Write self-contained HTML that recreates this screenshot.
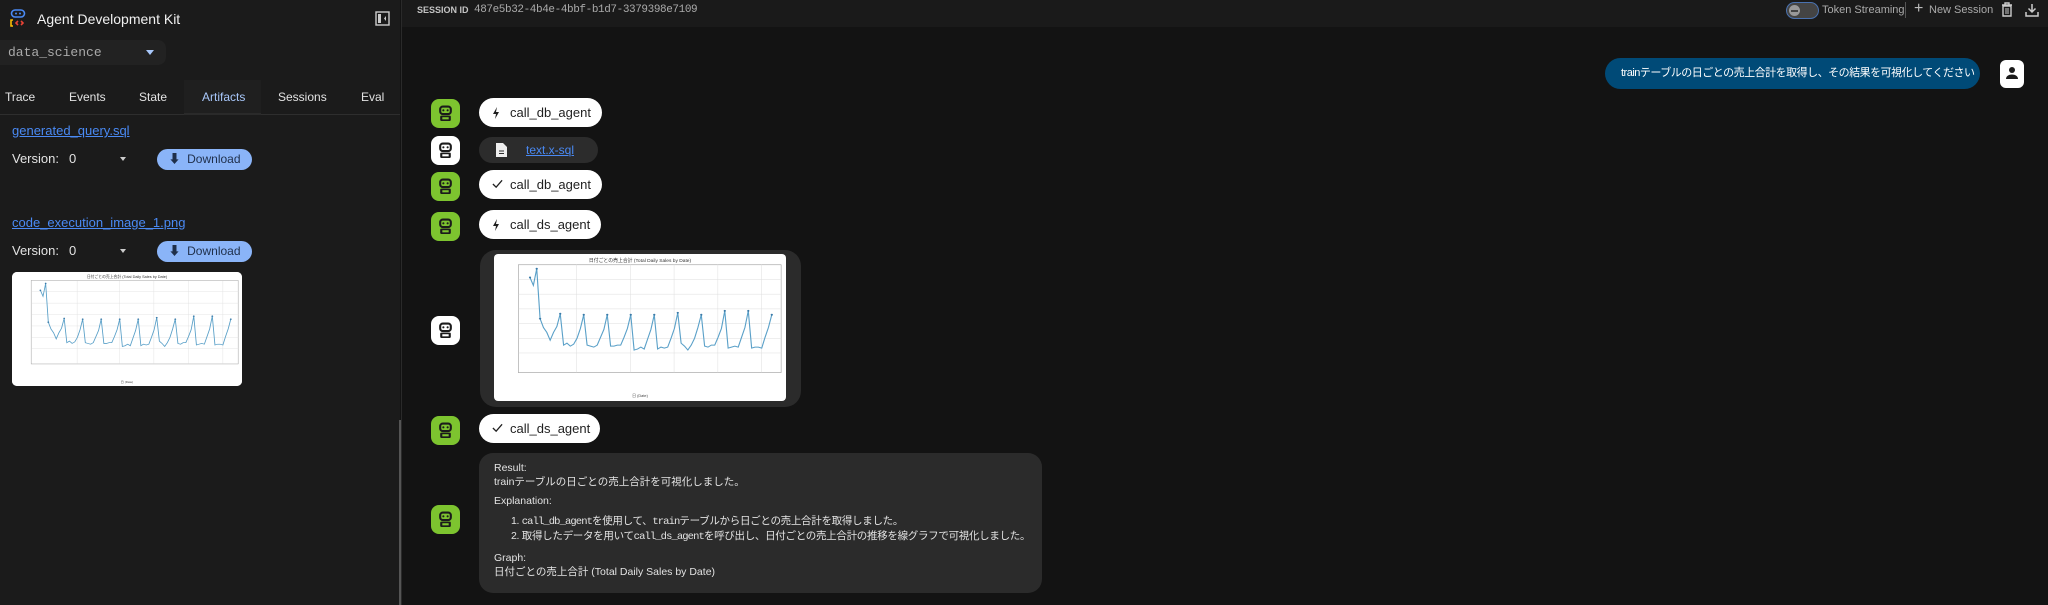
<!DOCTYPE html>
<html><head><meta charset="utf-8">
<style>
*{box-sizing:border-box;margin:0;padding:0}
body{width:2048px;height:605px;overflow:hidden;background:#131313;font-family:"Liberation Sans","Noto Sans CJK JP",sans-serif;color:#e3e3e3;position:relative}
.abs{position:absolute}
#side{left:0;top:0;width:400px;height:605px;background:#1b1b1b}
.mono{font-family:"Liberation Mono","Noto Sans CJK JP",monospace}
.tab{position:absolute;top:90px;font-size:12px;color:#e3e3e3}
.link{color:#4a8af4;text-decoration:underline;font-size:13px;position:absolute;left:12px}
.ver{position:absolute;left:12px;font-size:13px;color:#e3e3e3}
.btn{position:absolute;left:157px;width:95px;height:21px;border-radius:11px;background:#8ab4f8;color:#1f2f4a;font-size:12px;line-height:21px;text-align:center}
.av{position:absolute;left:431px;width:29px;height:29px;border-radius:8px;background:#7dc42f}
.av.w{background:#fff}
.av svg{position:absolute;left:6px;top:6px}
.chip{position:absolute;left:479px;height:29px;border-radius:15px;background:#fff;color:#1f1f1f;font-size:13px;line-height:29px;padding-left:31px;white-space:nowrap}
.chip svg{position:absolute;left:13px;top:9px}
.res{font-size:10.5px;line-height:14px;color:#e3e3e3;white-space:nowrap}
.res .mono{letter-spacing:-0.9px;font-size:10.5px}
.lst{letter-spacing:-0.3px}
</style></head><body>
<svg width="0" height="0" style="position:absolute">
<defs>
<symbol id="bot" viewBox="0 0 16 16"><rect x="3" y="1.5" width="10" height="7" rx="2.5" fill="none" stroke="#1b1b1b" stroke-width="2"/><circle cx="6" cy="5" r="1" fill="#1b1b1b"/><circle cx="10" cy="5" r="1" fill="#1b1b1b"/><rect x="3" y="10" width="10" height="5" rx="1" fill="#1b1b1b"/><rect x="5" y="11.5" width="6" height="2" fill="#7dc42f"/></symbol>
<symbol id="botw" viewBox="0 0 16 16"><rect x="3" y="1.5" width="10" height="7" rx="2.5" fill="none" stroke="#1b1b1b" stroke-width="2"/><circle cx="6" cy="5" r="1" fill="#1b1b1b"/><circle cx="10" cy="5" r="1" fill="#1b1b1b"/><rect x="3" y="10" width="10" height="5" rx="1" fill="#1b1b1b"/><rect x="5" y="11.5" width="6" height="2" fill="#fff"/></symbol>
<symbol id="chart" viewBox="0 0 300 150" preserveAspectRatio="none">
<rect width="300" height="150" fill="#fff"/>
<text x="150" y="8" font-size="5" text-anchor="middle" fill="#333" font-family="Liberation Sans">日付ごとの売上合計 (Total Daily Sales by Date)</text>
<rect x="25" y="11" width="270" height="110" fill="none" stroke="#999" stroke-width=".6"/>
<g stroke="#ddd" stroke-width=".5"><line x1="25" y1="26" x2="295" y2="26"/><line x1="25" y1="41" x2="295" y2="41"/><line x1="25" y1="56" x2="295" y2="56"/><line x1="25" y1="71" x2="295" y2="71"/><line x1="25" y1="86" x2="295" y2="86"/><line x1="25" y1="101" x2="295" y2="101"/><line x1="85" y1="11" x2="85" y2="121"/><line x1="140" y1="11" x2="140" y2="121"/><line x1="185" y1="11" x2="185" y2="121"/><line x1="230" y1="11" x2="230" y2="121"/><line x1="275" y1="11" x2="275" y2="121"/></g>
<g transform="translate(37,0) scale(1.15,1) translate(-37,0)">
<polyline fill="none" stroke="#5aa0c8" stroke-width="1" points="37,24 40,32 43,15 46,66 49,75 52,80 55,88 58,80 61,74 64,61 67,93 70,91 73,94 76,92 79,86 82,76 85,62 88,93 91,94 94,95 97,93 100,85 103,77 106,62 109,94 112,94 115,93 118,93 121,85 124,76 127,62 130,98 133,97 136,95 139,97 142,87 145,77 148,62 151,97 154,95 157,96 160,95 163,86 166,76 169,60 172,91 175,94 178,98 181,93 184,86 187,75 190,62 193,94 196,95 199,93 202,93 205,85 208,76 211,58 214,96 217,95 220,94 223,95 226,85 229,75 232,58 235,96 238,95 241,95 244,96 247,85 250,75 253,62"/>
</g>
<g fill="#3a7aa8" transform="translate(37,0) scale(1.15,1) translate(-37,0)"><circle cx="37" cy="24" r="1"/><circle cx="43" cy="15" r="1"/><circle cx="46" cy="66" r="1"/><circle cx="64" cy="61" r="1"/><circle cx="85" cy="62" r="1"/><circle cx="106" cy="62" r="1"/><circle cx="127" cy="62" r="1"/><circle cx="148" cy="62" r="1"/><circle cx="169" cy="60" r="1"/><circle cx="190" cy="62" r="1"/><circle cx="211" cy="58" r="1"/><circle cx="232" cy="58" r="1"/><circle cx="253" cy="62" r="1"/></g>
<text x="150" y="146" font-size="4" text-anchor="middle" fill="#444" font-family="Liberation Sans">日 (Date)</text>
</symbol>
<symbol id="bolt" viewBox="0 0 8 12"><path d="M5 0L1 7h3l-1 5 4-7H4z" fill="#1f1f1f"/></symbol>
<symbol id="chk" viewBox="0 0 12 10"><path d="M1 5l3.5 3.5L11 1" fill="none" stroke="#1f1f1f" stroke-width="1.4"/></symbol>
</defs></svg>

<div id="side" class="abs">
  <svg class="abs" style="left:9px;top:9px" width="18" height="18" viewBox="0 0 18 18"><rect x="2.5" y="1" width="13" height="7" rx="3.5" fill="none" stroke="#4a8af4" stroke-width="1.6"/><circle cx="7" cy="4.5" r="1" fill="#4a8af4"/><circle cx="11" cy="4.5" r="1" fill="#4a8af4"/><path d="M4 11H2v6h2" fill="none" stroke="#fbbc04" stroke-width="1.6"/><path d="M9 12l-2 2 2 2M12 12l2 2-2 2" fill="none" stroke="#ea4335" stroke-width="1.6"/></svg>
  <div class="abs" style="left:37px;top:11px;font-size:14px;color:#f1f1f1">Agent Development Kit</div>
  <svg class="abs" style="left:375px;top:11px" width="15" height="15" viewBox="0 0 15 15"><rect x="1" y="1" width="13" height="13" fill="none" stroke="#ccc" stroke-width="1.4"/><rect x="3" y="3" width="3" height="9" fill="#ccc"/><path d="M11 5l-2 2.5 2 2.5" fill="#ccc"/></svg>
  <div class="abs" style="left:0;top:40px;width:166px;height:25px;background:#222;border-radius:0 8px 8px 0"></div>
  <div class="abs mono" style="left:8px;top:45px;font-size:13px;color:#aaa">data_science</div>
  <div class="abs" style="left:146px;top:50px;width:0;height:0;border-left:4px solid transparent;border-right:4px solid transparent;border-top:5px solid #a8c7fa"></div>
  <div class="abs" style="left:184px;top:80px;width:77px;height:35px;background:#1f1f1f"></div>
  <div class="tab" style="left:5px">Trace</div>
  <div class="tab" style="left:69px">Events</div>
  <div class="tab" style="left:139px">State</div>
  <div class="tab" style="left:202px;color:#a8c7fa">Artifacts</div>
  <div class="tab" style="left:278px">Sessions</div>
  <div class="tab" style="left:361px">Eval</div>
  <div class="abs" style="left:0;top:114px;width:400px;height:1px;background:#2e2e2e"></div>
  <div class="abs" style="left:184px;top:113px;width:77px;height:2px;background:#2a2a2a"></div>

  <div class="link" style="top:123px">generated_query.sql</div>
  <div class="ver" style="top:151px">Version:</div>
  <div class="ver" style="left:69px;top:151px">0</div>
  <div class="abs" style="left:120px;top:157px;border-left:3.5px solid transparent;border-right:3.5px solid transparent;border-top:4px solid #ccc"></div>
  <div class="btn" style="top:149px">⬇&nbsp; Download</div>

  <div class="link" style="top:215px">code_execution_image_1.png</div>
  <div class="ver" style="top:243px">Version:</div>
  <div class="ver" style="left:69px;top:243px">0</div>
  <div class="abs" style="left:120px;top:249px;border-left:3.5px solid transparent;border-right:3.5px solid transparent;border-top:4px solid #ccc"></div>
  <div class="btn" style="top:241px">⬇&nbsp; Download</div>

  <div class="abs" style="left:12px;top:272px;width:230px;height:114px;border-radius:5px;overflow:hidden;background:#fff"><svg width="230" height="114"><use href="#chart" width="230" height="114"/></svg></div>
  <div class="abs" style="left:399px;top:420px;width:3px;height:185px;background:#555"></div>
</div>
<div class="abs" style="left:401px;top:0;width:1px;height:605px;background:#2a2a2a"></div>

<!-- top bar -->
<div class="abs" style="left:402px;top:0;width:1646px;height:27px;background:#1a1a1a"></div>
<div class="abs" style="left:417px;top:5px;font-size:9px;font-weight:bold;color:#c4c4c4">SESSION ID</div>
<div class="abs mono" style="left:474px;top:4px;font-size:11px;color:#aaa;letter-spacing:-0.4px">487e5b32-4b4e-4bbf-b1d7-3379398e7109</div>
<div class="abs" style="left:1786px;top:2px;width:33px;height:17px;border-radius:9px;background:#444;border:1.5px solid #4a72b0"></div>
<div class="abs" style="left:1789px;top:5px;width:11px;height:11px;border-radius:6px;background:#999"></div>
<div class="abs" style="left:1791px;top:10px;width:7px;height:1.5px;background:#444"></div>
<div class="abs" style="left:1822px;top:4px;font-size:11px;color:#aaa">Token Streaming</div>
<div class="abs" style="left:1905px;top:2px;width:1px;height:16px;background:#555"></div>
<div class="abs" style="left:1914px;top:0px;font-size:16px;color:#bbb">+</div>
<div class="abs" style="left:1929px;top:4px;font-size:11px;color:#aaa">New Session</div>
<svg class="abs" style="left:2001px;top:2px" width="12" height="15" viewBox="0 0 12 15"><path d="M1 3h10M4 3V1h4v2M2 4h8v10H2z" fill="none" stroke="#ccc" stroke-width="1.4"/><path d="M5 6v6M7 6v6" stroke="#ccc" stroke-width="1"/></svg>
<svg class="abs" style="left:2025px;top:3px" width="14" height="14" viewBox="0 0 14 14"><path d="M7 1v8M3.5 5.5L7 9l3.5-3.5M1 9v4h12V9" fill="none" stroke="#ccc" stroke-width="1.5"/></svg>

<!-- user message -->
<div class="abs" style="left:1605px;top:58px;width:375px;height:31px;border-radius:16px;background:#004a77;color:#fff;font-size:11px;letter-spacing:-0.5px;line-height:31px;padding-left:16px;white-space:nowrap;overflow:hidden">trainテーブルの日ごとの売上合計を取得し、その結果を可視化してください</div>
<div class="abs" style="left:2000px;top:60px;width:24px;height:28px;border-radius:6px;background:#fff"></div>
<svg class="abs" style="left:2005px;top:66px" width="14" height="14" viewBox="0 0 14 14"><circle cx="7" cy="4" r="3" fill="#1b1b1b"/><path d="M1 13c0-3 3-4.5 6-4.5s6 1.5 6 4.5z" fill="#1b1b1b"/></svg>

<!-- bot rows -->
<div class="av" style="top:99px"><svg width="17" height="17"><use href="#bot" width="17" height="17"/></svg></div>
<div class="chip" style="top:98px;width:123px"><svg width="8" height="12"><use href="#bolt" width="8" height="12"/></svg>call_db_agent</div>

<div class="av w" style="top:136px"><svg width="17" height="17"><use href="#botw" width="17" height="17"/></svg></div>
<div class="abs" style="left:479px;top:137px;width:119px;height:26px;border-radius:13px;background:#2c2c2c"></div>
<svg class="abs" style="left:496px;top:143px" width="11" height="14" viewBox="0 0 11 14"><path d="M0 0h7l4 4v10H0z" fill="#eee"/><path d="M3 8h5M3 10.5h5" stroke="#2c2c2c" stroke-width="1"/></svg>
<div class="abs" style="left:526px;top:143px;font-size:12px;color:#4a8af4;text-decoration:underline">text.x-sql</div>

<div class="av" style="top:172px"><svg width="17" height="17"><use href="#bot" width="17" height="17"/></svg></div>
<div class="chip" style="top:170px;width:123px"><svg width="11" height="10"><use href="#chk" width="11" height="10"/></svg>call_db_agent</div>

<div class="av" style="top:212px"><svg width="17" height="17"><use href="#bot" width="17" height="17"/></svg></div>
<div class="chip" style="top:210px;width:122px"><svg width="8" height="12"><use href="#bolt" width="8" height="12"/></svg>call_ds_agent</div>

<div class="av w" style="top:316px"><svg width="17" height="17"><use href="#botw" width="17" height="17"/></svg></div>
<div class="abs" style="left:480px;top:250px;width:321px;height:157px;border-radius:16px;background:#2b2b2b"></div>
<div class="abs" style="left:494px;top:254px;width:292px;height:147px;border-radius:4px;overflow:hidden"><svg width="292" height="147"><use href="#chart" width="292" height="147"/></svg></div>

<div class="av" style="top:416px"><svg width="17" height="17"><use href="#bot" width="17" height="17"/></svg></div>
<div class="chip" style="top:414px;width:121px"><svg width="11" height="10"><use href="#chk" width="11" height="10"/></svg>call_ds_agent</div>

<div class="av" style="top:505px"><svg width="17" height="17"><use href="#bot" width="17" height="17"/></svg></div>
<div class="abs" style="left:479px;top:453px;width:563px;height:140px;border-radius:14px;background:#2b2b2b"></div>
<div class="abs res" style="left:494px;top:461px">Result:<br>trainテーブルの日ごとの売上合計を可視化しました。</div>
<div class="abs res" style="left:494px;top:494px">Explanation:</div>
<div class="abs res lst" style="left:511px;top:514px">1. <span class="mono">call_db_agent</span>を使用して、<span class="mono">train</span>テーブルから日ごとの売上合計を取得しました。<br>2. 取得したデータを用いて<span class="mono">call_ds_agent</span>を呼び出し、日付ごとの売上合計の推移を線グラフで可視化しました。</div>
<div class="abs res" style="left:494px;top:551px">Graph:<br>日付ごとの売上合計 (Total Daily Sales by Date)</div>
</body></html>
